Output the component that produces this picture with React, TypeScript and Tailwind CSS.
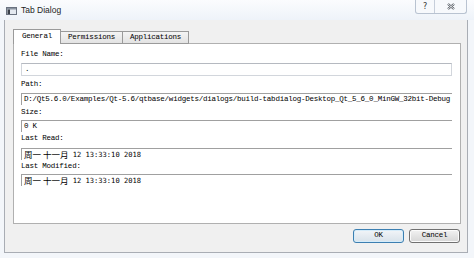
const mono = "font-['Liberation_Mono',monospace] text-[7.5px] tracking-[-0.24px] leading-none text-black whitespace-nowrap";

function Label({ children }: { children: string }) {
  return <div className={`h-[10px] flex items-center ${mono}`}>{children}</div>;
}

function Sunken({ children, className = "" }: { children: React.ReactNode; className?: string }) {
  return (
    <div className={`h-[12px] flex items-center overflow-hidden border-t border-l border-[#a0a0a0] pl-[2px] ${className}`}>{children}</div>
  );
}

function DateText() {
  return (
    <span className="flex items-center leading-none text-black whitespace-nowrap">
      <span className="font-['Noto_Sans_CJK_SC',sans-serif] text-[8.5px]">周一 十一月</span>
      <span className="font-['DejaVu_Sans_Mono',monospace] text-[7.1px] whitespace-pre"> 12 13:33:10 2018</span>
    </span>
  );
}

export default function App() {
  return (
    <div className="w-[474px] h-[258px] overflow-hidden bg-[#f3f6fa] flex flex-col">
      {/* title bar */}
      <div className="h-[20px] flex items-start bg-gradient-to-b from-[#fbfcfe] to-[#eef3f9]">
        <svg className="ml-[6px] mt-[7px]" width="11" height="8" viewBox="0 0 11 8">
          <rect x="0.5" y="0.5" width="10" height="7" fill="#e4e9f0" stroke="#6a7280" />
          <rect x="1" y="1" width="9" height="1.5" fill="#8a93a0" />
          <rect x="1.5" y="2.5" width="2.5" height="4.5" fill="#3a404a" />
        </svg>
        <span className="ml-[4px] mt-[6px] font-['Liberation_Sans',sans-serif] text-[8.5px] leading-none text-[#1e1e1e]">
          Tab Dialog
        </span>
        <div className="ml-auto mr-[7px] h-[14px] flex border border-t-0 border-[#b9c3d1] rounded-b-[3px] bg-[#f7f9fc]">
          <div className="w-[19px] flex items-center justify-center border-r border-[#c6ceda]">
            <span className="font-['DejaVu_Sans',sans-serif] text-[8px] leading-none text-[#333]">?</span>
          </div>
          <div className="w-[31px] flex items-center justify-center">
            <svg width="8" height="7" viewBox="0 0 8 7">
              <path d="M1 1 L7 6 M7 1 L1 6" stroke="#4a4f57" strokeWidth="2.2" />
              <path d="M1 1 L7 6 M7 1 L1 6" stroke="#f7f9fc" strokeWidth="0.9" />
            </svg>
          </div>
        </div>
      </div>

      {/* client area */}
      <div className="ml-[4px] mr-[6px] h-[233px] bg-[#f0f0f0] border-l border-r border-b border-[#a9adb4] flex flex-col">
        <div className="h-[24px] -mb-px relative z-10 flex items-end pl-[8px]">
          <div className={`w-[48px] h-[15px] bg-white border border-b-0 border-[#9a9a9a] flex items-center justify-center ${mono}`}>
            General
          </div>
          <div className={`w-[62px] h-[13px] bg-gradient-to-b from-[#f4f4f4] to-[#e3e3e3] border border-l-0 border-[#9a9a9a] flex items-center justify-center ${mono}`}>
            Permissions
          </div>
          <div className={`w-[66px] h-[13px] bg-gradient-to-b from-[#f4f4f4] to-[#e3e3e3] border border-l-0 border-[#9a9a9a] flex items-center justify-center ${mono}`}>
            Applications
          </div>
        </div>

        <div className="ml-[8px] mr-[6px] h-[181px] bg-white border border-[#b0b0b0] pl-[7px] pr-[8px] pt-[6px] flex flex-col">
          <Label>File Name:</Label>
          <div className="mt-[3px] h-[13px] border border-[#d2d6dc] border-t-[#b5b9c0] flex items-center pl-[3px]">
            <span className={mono}>.</span>
          </div>
          <div className="mt-[4px]">
            <Label>Path:</Label>
          </div>
          <Sunken className="mt-[3px]">
            <span className={mono}>
              D:/Qt5.6.0/Examples/Qt-5.6/qtbase/widgets/dialogs/build-tabdialog-Desktop_Qt_5_6_0_MinGW_32bit-Debug
            </span>
          </Sunken>
          <div className="mt-[3px]">
            <Label>Size:</Label>
          </div>
          <Sunken className="mt-[2px]">
            <span className={mono}>0 K</span>
          </Sunken>
          <div className="mt-[2px]">
            <Label>Last Read:</Label>
          </div>
          <Sunken className="mt-[4px]">
            <DateText />
          </Sunken>
          <div className="mt-[2px]">
            <Label>Last Modified:</Label>
          </div>
          <Sunken className="mt-[2px]">
            <DateText />
          </Sunken>
        </div>

        <div className="mt-[5px] mr-[7px] flex justify-end gap-[5px]">
          <button className="w-[51px] h-[14px] rounded-[3px] border border-[#3c7fb1] bg-gradient-to-b from-[#f2f5f8] to-[#d8e2ea] shadow-[inset_0_0_0_1px_#d5ecfa] flex items-center justify-center">
            <span className={mono}>OK</span>
          </button>
          <button className="w-[51px] h-[14px] rounded-[3px] border border-[#707070] bg-gradient-to-b from-[#f2f2f2] to-[#d6d6d6] shadow-[inset_0_0_0_1px_#fbfbfb] flex items-center justify-center">
            <span className={mono}>Cancel</span>
          </button>
        </div>
      </div>
    </div>
  );
}
